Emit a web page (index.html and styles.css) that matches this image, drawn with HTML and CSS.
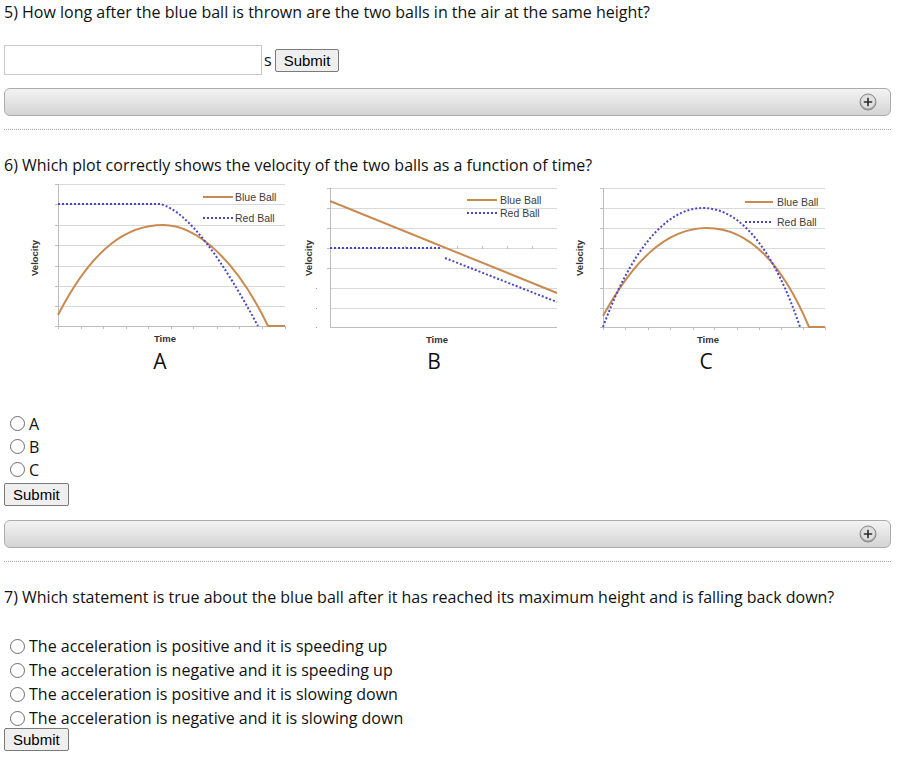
FILE: index.html
```html
<!DOCTYPE html>
<html lang="en">
<head>
    <meta charset="UTF-8">
    <meta name="viewport" content="width=device-width, initial-scale=1.0">
    <title>Quiz</title>
    <link rel="stylesheet" href="styles.css">
</head>
<body>
    <div id="quiz-wrap">
        <!-- question 5 -->
        <p class="question q5">5) How long after the blue ball is thrown are the two balls in the air at the same height?</p>
        <div class="answer-row">
            <input type="text" class="answer-input">
            <span class="unit">s</span>
            <button class="submit-btn">Submit</button>
        </div>
        <div class="hint-bar">
            <svg class="plus-icon" width="18" height="18" viewBox="0 0 18 18">
                <defs>
                    <radialGradient id="ring" cx="50%" cy="40%" r="60%">
                        <stop offset="0" stop-color="#f4f4f4"/>
                        <stop offset="0.7" stop-color="#d2d2d2"/>
                        <stop offset="1" stop-color="#8c8c8c"/>
                    </radialGradient>
                </defs>
                <circle cx="9" cy="9" r="8" fill="url(#ring)" stroke="#8a8a8a" stroke-width="1"/>
                <circle cx="9" cy="9" r="6" fill="#e2e2e2"/>
                <path d="M9 4.8v8.4M4.8 9h8.4" stroke="#2b2b2b" stroke-width="1.6"/>
            </svg>
        </div>
        <div class="divider"></div>

        <!-- question 6 -->
        <p class="question q6">6) Which plot correctly shows the velocity of the two balls as a function of time?</p>
        <div class="plots">
            <svg class="plot" width="272" height="195" viewBox="0 0 272 195">
                <g class="grid">
                    <line x1="34" y1="1.5" x2="261" y2="1.5"/>
                    <line x1="34" y1="21.5" x2="261" y2="21.5"/>
                    <line x1="34" y1="42.5" x2="261" y2="42.5"/>
                    <line x1="34" y1="62.5" x2="261" y2="62.5"/>
                    <line x1="34" y1="83.5" x2="261" y2="83.5"/>
                    <line x1="34" y1="103.5" x2="261" y2="103.5"/>
                    <line x1="34" y1="123.5" x2="261" y2="123.5"/>
                </g>
                <g class="axis">
                    <line x1="34.5" y1="1" x2="34.5" y2="143.5"/>
                    <line x1="34" y1="143.5" x2="261" y2="143.5"/>
                    <path d="M31 1.5h3M31 21.5h3M31 42.5h3M31 62.5h3M31 83.5h3M31 103.5h3M31 123.5h3M31 143.5h3"/>
                    <path d="M34.5 143v3M57.5 143v3M79.5 143v3M102.5 143v3M124.5 143v3M147.5 143v3M169.5 143v3M193.5 143v3M215.5 143v3M238.5 143v3M261.5 143v3"/>
                </g>
                <path class="blue-ball" d="M34 132 C70 62 105 42 139 42 C172 42 212 76 244 143 L261 143"/>
                <path class="red-ball" d="M34 21 L136 21 C165 28 200 80 234 143"/>
                <line class="blue-ball" x1="179" y1="14" x2="209" y2="14"/>
                <text class="legend" x="211" y="18">Blue Ball</text>
                <line class="red-ball" x1="179" y1="35" x2="209" y2="35"/>
                <text class="legend" x="211" y="39">Red Ball</text>
                <text class="axis-title" x="14" y="75" transform="rotate(-90 14 75)">Velocity</text>
                <text class="axis-title" x="141" y="159">Time</text>
                <text class="plot-letter" x="136" y="186">A</text>
            </svg>
            <svg class="plot" width="272" height="195" viewBox="0 0 272 195">
                <g class="grid">
                    <line x1="33" y1="5.5" x2="260" y2="5.5"/>
                    <line x1="33" y1="25.5" x2="260" y2="25.5"/>
                    <line x1="33" y1="45.5" x2="260" y2="45.5"/>
                    <line x1="33" y1="65.5" x2="260" y2="65.5"/>
                    <line x1="33" y1="85.5" x2="260" y2="85.5"/>
                    <line x1="33" y1="105.5" x2="260" y2="105.5"/>
                    <line x1="33" y1="125.5" x2="260" y2="125.5"/>
                </g>
                <g class="axis">
                    <line x1="33.5" y1="5" x2="33.5" y2="144.5"/>
                    <line x1="33" y1="144.5" x2="260" y2="144.5"/>
                    <path d="M30 5.5h3M30 25.5h3M30 45.5h3M30 65.5h3M30 85.5h3"/>
                    <path d="M58.5 63v3M83.5 63v3M108.5 63v3M134.5 63v3M160.5 63v3M185.5 63v3M210.5 63v3M235.5 63v3"/>
                </g>
                <path class="faint-dots" d="M19 105.5h1M19 125.5h1M19 144.5h1"/>
                <path class="blue-ball" d="M33 18 L260 110"/>
                <path class="red-ball" d="M33 65 L144 65"/>
                <path class="red-ball" d="M148 75 L260 119"/>
                <line class="blue-ball" x1="170" y1="17" x2="200" y2="17"/>
                <text class="legend" x="203" y="21">Blue Ball</text>
                <line class="red-ball" x1="170" y1="30" x2="200" y2="30"/>
                <text class="legend" x="203" y="34">Red Ball</text>
                <text class="axis-title" x="15" y="75" transform="rotate(-90 15 75)">Velocity</text>
                <text class="axis-title" x="140" y="160">Time</text>
                <text class="plot-letter" x="137" y="186">B</text>
            </svg>
            <svg class="plot" width="272" height="195" viewBox="0 0 272 195">
                <g class="grid">
                    <line x1="33" y1="5.5" x2="255" y2="5.5"/>
                    <line x1="33" y1="25.5" x2="255" y2="25.5"/>
                    <line x1="33" y1="45.5" x2="255" y2="45.5"/>
                    <line x1="33" y1="65.5" x2="255" y2="65.5"/>
                    <line x1="33" y1="85.5" x2="255" y2="85.5"/>
                    <line x1="33" y1="105.5" x2="255" y2="105.5"/>
                    <line x1="33" y1="125.5" x2="255" y2="125.5"/>
                </g>
                <g class="axis">
                    <line x1="33.5" y1="5" x2="33.5" y2="144.5"/>
                    <line x1="33" y1="144.5" x2="255" y2="144.5"/>
                    <path d="M30 5.5h3M30 25.5h3M30 45.5h3M30 65.5h3M30 85.5h3M30 105.5h3M30 125.5h3M30 144.5h3"/>
                    <path d="M33.5 144v3M55.5 144v3M78.5 144v3M100.5 144v3M123.5 144v3M144.5 144v3M167.5 144v3M189.5 144v3M211.5 144v3M233.5 144v3M255.5 144v3"/>
                </g>
                <path class="blue-ball" d="M33 133 C62 80 95 45 137 45 C175 45 210 75 239 144 L255 144"/>
                <path class="red-ball" d="M33 144 C60 70 95 25 133 25 C172 25 205 70 230 144"/>
                <line class="blue-ball" x1="175" y1="19" x2="203" y2="19"/>
                <text class="legend" x="207" y="23">Blue Ball</text>
                <line class="red-ball" x1="175" y1="39" x2="203" y2="39"/>
                <text class="legend" x="207" y="43">Red Ball</text>
                <text class="axis-title" x="13" y="75" transform="rotate(-90 13 75)">Velocity</text>
                <text class="axis-title" x="138" y="160">Time</text>
                <text class="plot-letter" x="136" y="186">C</text>
            </svg>
        </div>
        <div class="choices short">
            <label class="choice"><input type="radio" name="q6">A</label>
            <label class="choice"><input type="radio" name="q6">B</label>
            <label class="choice"><input type="radio" name="q6">C</label>
        </div>
        <button class="submit-btn">Submit</button>
        <div class="hint-bar bar-two">
            <svg class="plus-icon" width="18" height="18" viewBox="0 0 18 18">
                <circle cx="9" cy="9" r="8" fill="url(#ring)" stroke="#8a8a8a" stroke-width="1"/>
                <circle cx="9" cy="9" r="6" fill="#e2e2e2"/>
                <path d="M9 4.8v8.4M4.8 9h8.4" stroke="#2b2b2b" stroke-width="1.6"/>
            </svg>
        </div>
        <div class="divider"></div>

        <!-- question 7 -->
        <p class="question q7">7) Which statement is true about the blue ball after it has reached its maximum height and is falling back down?</p>
        <div class="choices long">
            <label class="choice"><input type="radio" name="q7">The acceleration is positive and it is speeding up</label>
            <label class="choice"><input type="radio" name="q7">The acceleration is negative and it is speeding up</label>
            <label class="choice"><input type="radio" name="q7">The acceleration is positive and it is slowing down</label>
            <label class="choice"><input type="radio" name="q7">The acceleration is negative and it is slowing down</label>
        </div>
        <button class="submit-btn">Submit</button>
    </div>
</body>
</html>
```

FILE: styles.css
```css
* {box-sizing: border-box;}
body {
    margin: 0;
    font-family: "Open Sans", "Noto Sans", sans-serif;
    font-size: 16px;
    color: #111;
}
#quiz-wrap {
    width: 887px;
    margin-left: 4px;
}
.question {margin: 0; line-height: 18px;}
.q5 {padding-top: 3px;}
.q6 {margin-top: 26px;}
.q7 {margin-top: 26px;}

.answer-row {
    display: flex;
    align-items: center;
    margin-top: 24px;
}
.answer-input {
    width: 258px;
    height: 30px;
    border: 1px solid #c8c8c8;
    margin: 0;
}
.unit {margin-left: 2px;}
.answer-row .submit-btn {margin-left: 3px;}

.submit-btn {
    display: block;
    height: 23px;
    padding: 0 8px;
    font-family: "Liberation Sans", Arial, sans-serif;
    font-size: 15px;
    color: #000;
    background: #efefef;
    border: 1px solid #7a7a7a;
    border-radius: 2px;
}

.hint-bar {
    display: flex;
    justify-content: flex-end;
    align-items: center;
    height: 28px;
    margin-top: 13px;
    padding-right: 13px;
    border: 1px solid #ababab;
    border-radius: 6px;
    background: linear-gradient(#f3f3f3, #d4d4d4);
}
.bar-two {margin-top: 14px;}
.divider {
    margin-top: 13px;
    border-top: 1px dotted #a8a8a8;
}

.plots {
    display: flex;
    gap: 1px;
    margin-top: 9px;
    margin-left: 20px;
}
.plot {display: block;}
.grid line {stroke: #d9d9d9; stroke-width: 1;}
.axis line, .axis path {stroke: #bdbdbd; stroke-width: 1; fill: none;}
.faint-dots {stroke: #9a9a9a; stroke-width: 1;}
.blue-ball {fill: none; stroke: #c98a52; stroke-width: 2;}
.red-ball {fill: none; stroke: #4848c6; stroke-width: 2; stroke-dasharray: 2 2;}
.legend {font: 10.5px "Liberation Sans", Arial, sans-serif; fill: #3c3c3c;}
.axis-title {font: bold 9.5px "Liberation Sans", Arial, sans-serif; fill: #333; text-anchor: middle;}
.plot-letter {font: 21px "Open Sans", "Noto Sans", sans-serif; fill: #111; text-anchor: middle;}

.choices {display: flex; flex-direction: column;}
.choices.short {margin-top: 34px;}
.choices.short .choice {height: 23px;}
.choices.short + .submit-btn {margin-top: 2px;}
.choices.long {margin-top: 28px;}
.choices.long .choice {height: 24px;}
.choices.long + .submit-btn {margin-top: -2px;}
.choice {
    display: flex;
    align-items: center;
    line-height: 18px;
}
.choice input {
    appearance: none;
    width: 15px;
    height: 15px;
    margin: 0 4px 0 6px;
    border: 1px solid #6e6e6e;
    border-radius: 50%;
    background: #fff;
}
```
